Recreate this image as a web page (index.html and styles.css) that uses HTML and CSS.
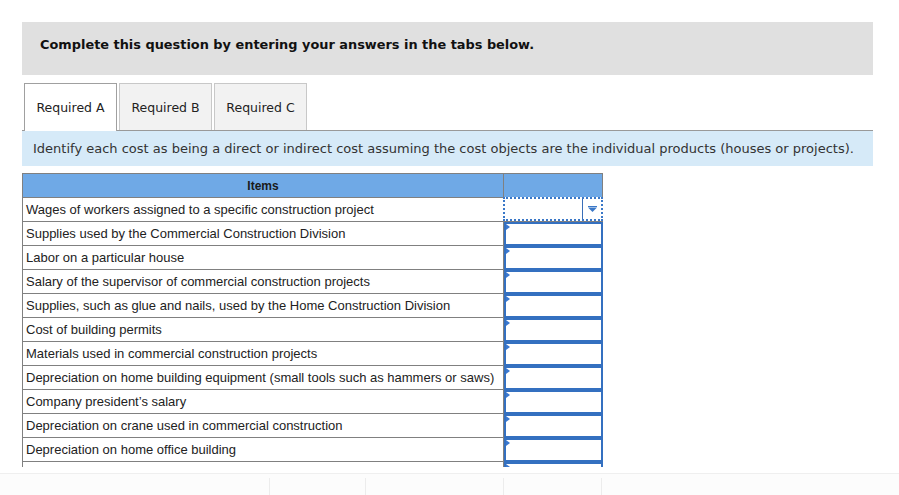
FILE: index.html
```html
<!DOCTYPE html>
<html>
<head>
<meta charset="utf-8">
<link rel="stylesheet" href="styles.css">
</head>
<body>
<div class="main">
  <div class="prompt">Complete this question by entering your answers in the tabs below.</div>
  <div class="tabs">
    <div class="tab active">Required A</div>
    <div class="tab">Required B</div>
    <div class="tab">Required C</div>
  </div>
  <div class="instr">Identify each cost as being a direct or indirect cost assuming the cost objects are the individual products (houses or projects).</div>
  <table class="grid">
    <colgroup><col class="c1"><col class="c2"></colgroup>
    <thead>
      <tr><th>Items</th><th></th></tr>
    </thead>
    <tbody>
      <tr><td>Wages of workers assigned to a specific construction project</td><td class="sel"><div class="dd"><span class="dd-val"></span><span class="dd-btn"><svg width="9" height="6" viewBox="0 0 9 6"><rect x="0" y="0" width="9" height="1" fill="#3b78c8"/><path d="M0 1.5 H9 L4.5 6 Z" fill="#3b78c8"/></svg></span></div></td></tr>
      <tr><td>Supplies used by the Commercial Construction Division</td><td class="sel"><div class="inp"></div></td></tr>
      <tr><td>Labor on a particular house</td><td class="sel"><div class="inp"></div></td></tr>
      <tr><td>Salary of the supervisor of commercial construction projects</td><td class="sel"><div class="inp"></div></td></tr>
      <tr><td>Supplies, such as glue and nails, used by the Home Construction Division</td><td class="sel"><div class="inp"></div></td></tr>
      <tr><td>Cost of building permits</td><td class="sel"><div class="inp"></div></td></tr>
      <tr><td>Materials used in commercial construction projects</td><td class="sel"><div class="inp"></div></td></tr>
      <tr><td>Depreciation on home building equipment (small tools such as hammers or saws)</td><td class="sel"><div class="inp"></div></td></tr>
      <tr><td>Company president’s salary</td><td class="sel"><div class="inp"></div></td></tr>
      <tr><td>Depreciation on crane used in commercial construction</td><td class="sel"><div class="inp"></div></td></tr>
      <tr><td>Depreciation on home office building</td><td class="sel"><div class="inp"></div></td></tr>
      <tr><td></td><td class="sel"><div class="inp"></div></td></tr>
    </tbody>
  </table>
</div>
<div class="footer">
  <div class="fcell f1"></div>
  <div class="fcell f2"></div>
  <div class="fcell f3"></div>
  <div class="fcell f4"></div>
  <div class="fcell f5"></div>
</div>
</body>
</html>
```

FILE: styles.css
```css
html, body {
  margin: 0;
  padding: 0;
  background: #fff;
}
body {
  width: 899px;
  height: 495px;
  overflow: hidden;
  font-family: "DejaVu Sans", Verdana, sans-serif;
  color: #333;
}
.main {
  height: 467px;
  overflow: hidden;
  padding: 22px 26px 0 22px;
  box-sizing: border-box;
}
.prompt {
  height: 53px;
  background: #e0e0e0;
  box-sizing: border-box;
  padding: 15px 0 0 18px;
  font-size: 12.9px;
  font-weight: bold;
  color: #111;
  line-height: 16px;
}
.tabs {
  display: flex;
  gap: 2px;
  margin-top: 8px;
  padding-left: 2px;
  border-bottom: 1px solid #999;
  height: 47px;
}
.tab {
  width: 93px;
  height: 47px;
  box-sizing: border-box;
  border: 1px solid #c8c8c8;
  border-bottom: none;
  background: #f2f2f2;
  display: flex;
  align-items: center;
  justify-content: center;
  font-size: 12.5px;
  color: #222;
}
.tab.active {
  background: #fff;
  border-color: #a0a0a0;
  height: 48px;
  position: relative;
  z-index: 1;
}
.instr {
  height: 35px;
  box-sizing: border-box;
  background: #d6eaf8;
  padding: 10px 0 0 11px;
  font-size: 13px;
  line-height: 16px;
  color: #333;
}
.grid {
  margin-top: 7px;
  border-collapse: collapse;
  width: 580px;
  table-layout: fixed;
  font-family: "Liberation Sans", Arial, sans-serif;
  font-size: 13px;
  color: #222;
}
.grid .c1 { width: 481px; }
.grid .c2 { width: 99px; }
.grid th {
  background: #6fa9e6;
  border: 1px solid #808080;
  height: 23px;
  padding: 0;
  font-size: 12px;
  font-weight: bold;
  color: #1a1a1a;
}
.grid td {
  border: 1px solid #808080;
  height: 23px;
  padding: 0 0 0 3px;
  white-space: nowrap;
}
.grid td.sel {
  padding: 0;
  position: relative;
}
.inp {
  position: absolute;
  left: 0;
  top: 0;
  right: -1px;
  bottom: -1px;
  border: 2px solid #3470c0;
  box-sizing: border-box;
}
.inp::before {
  content: "";
  position: absolute;
  left: 0;
  top: 0;
  border-left: 4px solid #3a78d0;
  border-top: 3px solid transparent;
  border-bottom: 3px solid transparent;
}
.dd {
  position: absolute;
  left: -1px;
  top: -1px;
  right: -1px;
  bottom: 0;
  border: 2px dotted #3a78c8;
  box-sizing: border-box;
  display: flex;
  background: #fff;
}
.dd-val {
  flex: 1;
  border-right: 1px solid #3a6fb8;
}
.dd-btn {
  width: 18px;
  display: flex;
  align-items: center;
  justify-content: center;
}
.footer {
  margin-top: 6px;
  height: 22px;
  border-top: 1px solid #efefef;
  background: #fcfcfc;
  display: flex;
  box-sizing: border-box;
}
.fcell {
  margin-top: 4px;
  height: 18px;
  border-left: 1px solid #ececec;
}
.f1 { width: 269px; border-left: none; }
.f2 { width: 95px; }
.f3 { width: 137px; }
.f4 { width: 97px; }
.f5 { flex: 1; }
```
